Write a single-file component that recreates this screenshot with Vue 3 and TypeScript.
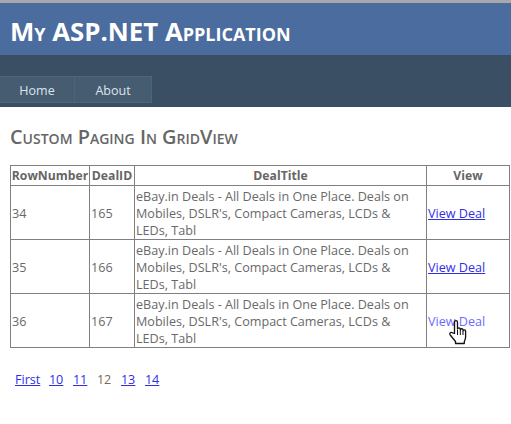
<script setup lang="ts">
const rows = [
  { n: 34, id: 165 },
  { n: 35, id: 166 },
  { n: 36, id: 167 },
]
const title = "eBay.in Deals - All Deals in One Place. Deals on Mobiles, DSLR's, Compact Cameras, LCDs & LEDs, Tabl"
</script>

<template>
  <div class="page">
    <header class="top">
      <h1>My ASP.NET Application</h1>
    </header>
    <nav class="menu">
      <a class="tab first">Home</a>
      <a class="tab">About</a>
    </nav>
    <main class="main">
      <h2>Custom Paging In GridView</h2>
      <table>
        <colgroup>
          <col style="width:79px" />
          <col style="width:45px" />
          <col style="width:292px" />
          <col style="width:83px" />
        </colgroup>
        <thead>
          <tr>
            <th>RowNumber</th>
            <th>DealID</th>
            <th>DealTitle</th>
            <th>View</th>
          </tr>
        </thead>
        <tbody>
          <tr v-for="(r, i) in rows" :key="r.n">
            <td>{{ r.n }}</td>
            <td>{{ r.id }}</td>
            <td>{{ title }}</td>
            <td class="view">
              <a href="#" :class="{ hover: i === 2 }">View Deal</a>
              <svg v-if="i === 2" class="hand" viewBox="0 0 20 26" width="20" height="26">
                <path d="M6.5 14.5V3.2c0-2 3-2 3 0V10c0-1.4 2.8-1.4 2.8 0v.8c0-1.4 2.7-1.4 2.7 0v1c0-1.2 2.6-1.2 2.6.2v6c0 2-.6 3.2-1.3 4.6v1.9H7.5v-2L2.2 16c-1.3-1.7.8-3.4 2.3-2.2z" fill="#fff" stroke="#111" stroke-width="1.3" stroke-linejoin="round" />
                <path d="M9.5 11v5M12.3 11v5M15 12v4" fill="none" stroke="#111" stroke-width="1" />
              </svg>
            </td>
          </tr>
        </tbody>
      </table>
      <div class="pager">
        <a href="#">First</a>
        <a href="#">10</a>
        <a href="#">11</a>
        <span>12</span>
        <a href="#">13</a>
        <a href="#">14</a>
      </div>
    </main>
  </div>
</template>

<style>
html, body { margin: 0; background: #fff; }
</style>

<style scoped>
.page {
  width: 511px;
  height: 424px;
  overflow: hidden;
  font-family: "Open Sans", "Noto Sans", sans-serif;
  font-size: 12.6px;
  color: #696969;
  background: #fff;
}
.top {
  height: 52px;
  border-top: 3px solid #a9a9ab;
  background: #4b6c9e;
  padding-left: 10px;
}
h1 {
  margin: 0;
  padding-top: 13px;
  font-family: "Open Sans", sans-serif;
  font-variant: small-caps;
  font-size: 25.8px;
  line-height: 30px;
  font-weight: 700;
  color: #fff;
}
.menu {
  height: 52px;
  background: #3a4f63;
  display: flex;
  align-items: flex-start;
  padding-top: 21px;
  box-sizing: border-box;
}
.tab {
  width: 75px;
  height: 27px;
  box-sizing: border-box;
  background: #465c71;
  border: 1px solid #4b6581;
  border-left: 0;
  color: #dde4ec;
  font-size: 12.5px;
  line-height: 27px;
  text-align: center;
}
.tab + .tab { width: 77px; }
.main { padding: 0 0 0 10px; }
h2 {
  margin: 0;
  padding-top: 19px;
  height: 58px;
  box-sizing: border-box;
  font-family: "Open Sans", sans-serif;
  font-variant: small-caps;
  font-size: 19.9px;
  line-height: 21px;
  font-weight: 600;
  color: #666666;
}
table {
  width: 499px;
  table-layout: fixed;
  border-collapse: collapse;
  font-size: 12.6px;
}
th, td {
  border: 1px solid #808080;
  padding: 2px 1px 0;
  line-height: 17px;
  overflow: hidden;
}
th {
  height: 19px;
  text-align: center;
  font-size: 12.2px;
  font-weight: 700;
  white-space: nowrap;
  color: #666;
  padding: 0;
}
td { height: 53px; box-sizing: border-box; }
.view { position: relative; overflow: visible; }
a { color: #2f2fe6; }
a.hover { color: #6a6aff; text-decoration: none; }
.hand {
  position: absolute;
  left: 21px;
  top: 25px;
}
.pager {
  margin-top: 23px;
  padding-left: 5px;
  display: flex;
  gap: 9.6px;
  line-height: 17px;
}
.pager a:first-child { margin-right: -1px; }
.pager span { color: #7a6a55; }
</style>
